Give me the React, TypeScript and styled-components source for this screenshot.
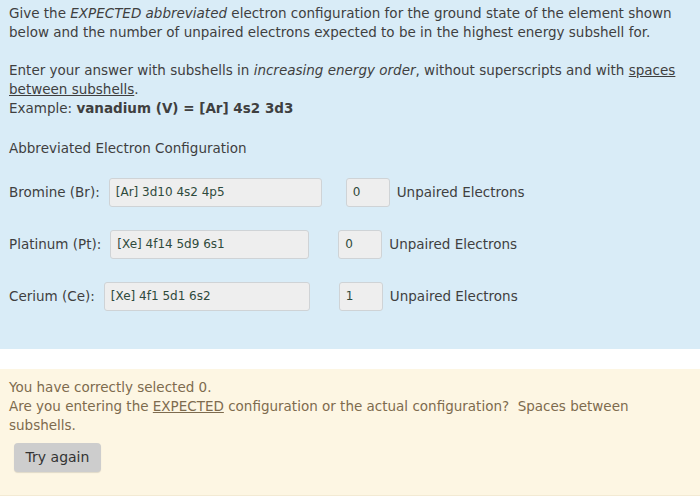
import React from "react";
import styled, { createGlobalStyle } from "styled-components";

const Global = createGlobalStyle`
  html, body { margin: 0; padding: 0; background: #ffffff; }
  body { font-family: "DejaVu Sans", Verdana, sans-serif; font-size: 13.5px; color: #3f3f3f; }
`;

const Page = styled.div`
  width: 700px;
  height: 500px;
  display: flex;
  flex-direction: column;
  overflow: hidden;
`;

const QuestionPanel = styled.div`
  background: #d9ecf7;
  height: 349px;
  box-sizing: border-box;
  padding: 4px 14px 0 9px;
  line-height: 19px;
`;

const Para = styled.p<{ $mt?: number }>`
  margin: ${(p) => p.$mt ?? 0}px 0 0 0;
`;

const U = styled.span`
  text-decoration: underline;
`;

const SectionTitle = styled.div`
  margin-top: 21px;
`;

const Row = styled.div<{ $mt: number }>`
  display: flex;
  align-items: center;
  margin-top: ${(p) => p.$mt}px;
  height: 28px;
`;

const Label = styled.span`
  margin-right: 9px;
  white-space: nowrap;
`;

const ConfigInput = styled.div<{ $w: number }>`
  width: ${(p) => p.$w}px;
  height: 29px;
  flex: none;
  box-sizing: border-box;
  border: 1px solid #cfd3d6;
  border-radius: 3px;
  background: #eeeeee;
  font-size: 12px;
  color: #2e4a3c;
  padding: 0 6px;
  display: flex;
  align-items: center;
`;

const CountInput = styled(ConfigInput)<{ $gap: number }>`
  margin-left: ${(p) => p.$gap}px;
  margin-right: 7px;
`;

const FeedbackPanel = styled.div`
  margin-top: 20px;
  background: #fdf6e3;
  height: 127px;
  box-sizing: border-box;
  border-bottom: 1px solid #f3ead3;
  padding: 9px 50px 0 9px;
  color: #7d6b4e;
  line-height: 19px;
`;

const Button = styled.div`
  margin-top: 8px;
  margin-left: 5px;
  width: 87px;
  height: 29px;
  border-radius: 4px;
  background: #cdcdcd;
  color: #333333;
  font-size: 14px;
  display: flex;
  align-items: center;
  justify-content: center;
  box-shadow: 0 1px 1px rgba(0,0,0,0.12);
`;

const rows = [
  { label: "Bromine (Br):", value: "[Ar] 3d10 4s2 4p5", w: 213, gap: 24, count: "0", mt: 20 },
  { label: "Platinum (Pt):", value: "[Xe] 4f14 5d9 6s1", w: 199, gap: 29, count: "0", mt: 24 },
  { label: "Cerium (Ce):", value: "[Xe] 4f1 5d1 6s2", w: 206, gap: 29, count: "1", mt: 24 },
];

export default function App() {
  return (
    <Page>
      <Global />
      <QuestionPanel>
        <Para>
          Give the <i>EXPECTED abbreviated</i> electron configuration for the ground state of the element shown below and the number of unpaired electrons expected to be in the highest energy subshell for.
        </Para>
        <Para $mt={19}>
          Enter your answer with subshells in <i>increasing energy order</i>, without superscripts and with <U>spaces between subshells</U>.
          <br />
          Example: <b>vanadium (V) = [Ar] 4s2 3d3</b>
        </Para>
        <SectionTitle>Abbreviated Electron Configuration</SectionTitle>
        {rows.map((r) => (
          <Row key={r.label} $mt={r.mt}>
            <Label>{r.label}</Label>
            <ConfigInput $w={r.w}>{r.value}</ConfigInput>
            <CountInput $w={44} $gap={r.gap}>{r.count}</CountInput>
            <span>Unpaired Electrons</span>
          </Row>
        ))}
      </QuestionPanel>
      <FeedbackPanel>
        You have correctly selected 0.
        <br />
        Are you entering the <U>EXPECTED</U> configuration or the actual configuration?&nbsp; Spaces between subshells.
        <Button>Try again</Button>
      </FeedbackPanel>
    </Page>
  );
}
